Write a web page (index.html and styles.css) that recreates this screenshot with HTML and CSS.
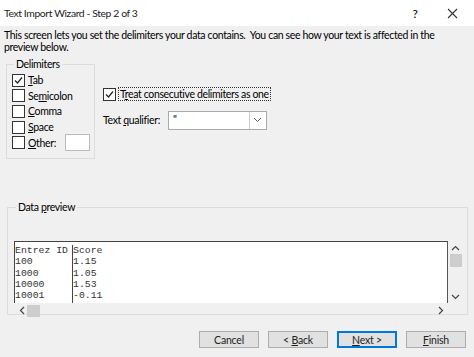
FILE: index.html
```html
<!DOCTYPE html>
<html lang="en">
<head>
    <meta charset="UTF-8">
    <meta name="viewport" content="width=device-width, initial-scale=1.0">
    <title>Text Import Wizard - Step 2 of 3</title>
    <link rel="stylesheet" href="styles.css">
</head>
<body>
    <div class="window">
        <div class="titlebar">
            <span class="title">Text Import Wizard - Step 2 of 3</span>
            <span class="help">?</span>
            <span class="close">
                <svg width="11" height="11" viewBox="0 0 11 11"><path d="M1 1 L10 10 M10 1 L1 10" stroke="#333" stroke-width="1.1" fill="none"/></svg>
            </span>
        </div>

        <div class="content">
            <p class="intro">This screen lets you set the delimiters your data contains.&nbsp; You can see how your text is affected in the preview below.</p>

            <div class="settings">
                <fieldset class="group delimiters">
                    <legend>Delimiters</legend>
                    <label class="check"><span class="box checked"></span><span><u>T</u>ab</span></label>
                    <label class="check"><span class="box"></span><span>Se<u>m</u>icolon</span></label>
                    <label class="check"><span class="box"></span><span><u>C</u>omma</span></label>
                    <label class="check"><span class="box"></span><span><u>S</u>pace</span></label>
                    <label class="check"><span class="box"></span><span><u>O</u>ther:</span><span class="textbox"></span></label>
                </fieldset>

                <div class="options">
                    <label class="check"><span class="box checked"></span><span class="focus">T<u>r</u>eat consecutive delimiters as one</span></label>
                    <div class="qualifier">
                        <span>Text <u>q</u>ualifier:</span>
                        <div class="combo">
                            <span class="value">"</span>
                            <span class="drop">
                                <svg width="9" height="6" viewBox="0 0 9 6"><path d="M1 1 L4.5 4.5 L8 1" stroke="#555" stroke-width="1" fill="none"/></svg>
                            </span>
                        </div>
                    </div>
                </div>
            </div>

            <fieldset class="group preview">
                <legend>Data <u>p</u>review</legend>
                <div class="preview-area">
                    <div class="preview-main">
                        <div class="sheet">
                            <div class="col first">
                                <div>Entrez ID</div>
                                <div>100</div>
                                <div>1000</div>
                                <div>10000</div>
                                <div>10001</div>
                            </div>
                            <div class="col">
                                <div>Score</div>
                                <div>1.15</div>
                                <div>1.05</div>
                                <div>1.53</div>
                                <div>-0.11</div>
                            </div>
                        </div>
                        <div class="vscroll">
                            <svg width="9" height="6" viewBox="0 0 9 6"><path d="M1 5 L4.5 1.5 L8 5" stroke="#444" stroke-width="1.2" fill="none"/></svg>
                            <span class="thumb"></span>
                            <svg width="9" height="6" viewBox="0 0 9 6"><path d="M1 1 L4.5 4.5 L8 1" stroke="#444" stroke-width="1.2" fill="none"/></svg>
                        </div>
                    </div>
                    <div class="hscroll">
                        <svg width="6" height="9" viewBox="0 0 6 9"><path d="M5 1 L1.5 4.5 L5 8" stroke="#444" stroke-width="1.2" fill="none"/></svg>
                        <span class="thumb"></span>
                        <span class="spacer"></span>
                        <svg width="6" height="9" viewBox="0 0 6 9"><path d="M1 1 L4.5 4.5 L1 8" stroke="#444" stroke-width="1.2" fill="none"/></svg>
                    </div>
                </div>
            </fieldset>

            <div class="buttons">
                <button>Cancel</button>
                <button>&lt; <u>B</u>ack</button>
                <button class="default"><u>N</u>ext &gt;</button>
                <button><u>F</u>inish</button>
            </div>
        </div>
    </div>
</body>
</html>
```

FILE: styles.css
```css
body {
    margin: 0;
    font-family: Lato, "Noto Sans", sans-serif;
    font-size: 10.5px;
    letter-spacing: -0.35px;
    color: #000;
}
.window {
    width: 474px;
    height: 357px;
    background-color: #f0f0f0;
    overflow: hidden;
}
.titlebar {
    height: 26px;
    background-color: #fff;
    display: flex;
    align-items: center;
    padding: 0 16px 0 4px;
    font-size: 10.4px;
    letter-spacing: -0.4px;
}
.title {
    flex: 1;
    color: #222;
}
.help {
    width: 22px;
    margin-right: 21px;
    text-align: center;
    font-size: 12px;
}
.close {
    display: flex;
}
.content {
    padding: 3px 6px 0 4px;
}
.intro {
    margin: 0 0 5px 0;
    line-height: 12px;
}
.settings {
    display: flex;
    align-items: flex-start;
}
.group {
    border: 1px solid #dcdcdc;
    margin: 0;
    padding: 0;
}
.group legend {
    padding: 0 2px;
    margin-left: 2px;
    line-height: 12px;
}
.delimiters {
    width: 89px;
    height: 101px;
    margin-left: 2px;
    padding: 4px 0 0 5px;
    box-sizing: border-box;
    display: flex;
    flex-direction: column;
    gap: 3px;
}
.check {
    display: flex;
    align-items: center;
    gap: 3px;
    height: 12.6px;
}
.box {
    width: 11px;
    height: 11px;
    border: 1px solid #333;
    background: #fff;
    flex: none;
}
.box.checked {
    background: #fff url("data:image/svg+xml;utf8,<svg xmlns='http://www.w3.org/2000/svg' width='11' height='11'><path d='M2 5.5 L4.5 8 L9 2.5' stroke='%23222' stroke-width='1.2' fill='none'/></svg>") no-repeat center;
}
.textbox {
    width: 23px;
    height: 15px;
    border: 1px solid #bbb;
    background: #fff;
    margin-left: 6px;
}
.options {
    margin: 30px 0 0 8px;
    display: flex;
    flex-direction: column;
    gap: 10px;
}
.focus {
    outline: 1px dotted #333;
    padding: 0 1px;
}
.qualifier {
    display: flex;
    align-items: center;
    gap: 8px;
}
.combo {
    width: 97px;
    height: 17px;
    border: 1px solid #aaa;
    background: #fff;
    display: flex;
}
.combo .value {
    flex: 1;
    padding-left: 4px;
    line-height: 15px;
}
.combo .drop {
    width: 16px;
    border-left: 1px solid #ccc;
    display: flex;
    align-items: center;
    justify-content: center;
}
.preview {
    margin: 42px 0 0 3px;
    height: 114px;
    padding: 28px 4px 0 6px;
    box-sizing: border-box;
}
.preview-main {
    display: flex;
    height: 62px;
}
.sheet {
    flex: 1;
    background: #fff;
    border-top: 1px solid #444;
    border-left: 1px solid #444;
    border-right: 1px solid #555;
    display: flex;
    font-family: "Liberation Mono", monospace;
    font-size: 9.8px;
    letter-spacing: 0;
    line-height: 11.3px;
    color: #333;
    padding-top: 3px;
    overflow: hidden;
}
.col.first {
    width: 57px;
    border-right: 1px solid #444;
}
.vscroll {
    width: 15px;
    display: flex;
    flex-direction: column;
    align-items: center;
    justify-content: space-between;
    padding: 4px 0 3px;
    box-sizing: border-box;
}
.vscroll .thumb {
    width: 12px;
    height: 13px;
    background: #cdcdcd;
    margin: 3px 0 auto 0;
}
.hscroll {
    height: 15px;
    width: 434px;
    display: flex;
    align-items: center;
    padding: 0 4px 0 5px;
    box-sizing: border-box;
    gap: 2px;
}
.hscroll .thumb {
    width: 13px;
    height: 12px;
    background: #cdcdcd;
}
.hscroll .spacer {
    flex: 1;
}
.buttons {
    display: flex;
    justify-content: flex-end;
    gap: 9px;
    margin-top: 16px;
    padding-right: 2px;
}
button {
    width: 60px;
    height: 17px;
    padding: 0;
    font-family: inherit;
    font-size: 10.5px;
    letter-spacing: -0.2px;
    color: #222;
    background-color: #e1e1e1;
    border: 1px solid #adadad;
}
button.default {
    border: 1px solid #0078d7;
    box-shadow: inset 0 0 0 1px #0078d7;
}
```
